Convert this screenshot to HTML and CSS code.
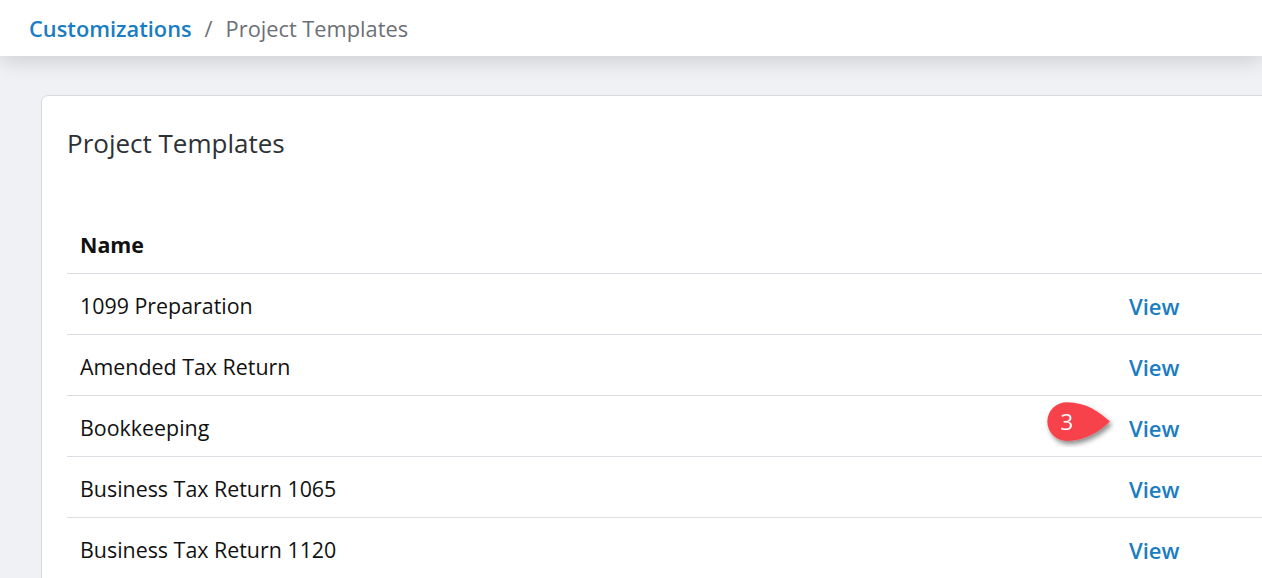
FILE: index.html
```html
<!DOCTYPE html>
<html lang="en">
<head>
<meta charset="utf-8">
<title>Project Templates</title>
<link rel="stylesheet" href="styles.css">
</head>
<body>
<header class="topbar">
  <nav class="crumbs">
    <a class="crumb-link" href="#">Customizations</a>
    <span class="crumb-sep">/</span>
    <span class="crumb-current">Project Templates</span>
  </nav>
</header>
<main class="page">
  <section class="card">
    <h1 class="card-title">Project Templates</h1>
    <div class="table">
      <div class="row head"><div class="cell">Name</div><div class="cell"></div></div>
      <div class="row"><div class="cell">1099 Preparation</div><div class="cell"><a class="view" href="#">View</a></div></div>
      <div class="row"><div class="cell">Amended Tax Return</div><div class="cell"><a class="view" href="#">View</a></div></div>
      <div class="row"><div class="cell">Bookkeeping</div><div class="cell action">
        <span class="badge">
          <svg class="badge-shape" viewBox="0 0 66 44" width="66" height="44">
            <defs>
              <filter id="sh" x="-30%" y="-30%" width="160%" height="180%">
                <feDropShadow dx="2" dy="3" stdDeviation="2.5" flood-color="#000" flood-opacity="0.45"/>
              </filter>
            </defs>
            <path d="M62 20 C52 11 40 2 22 2 A18 18 0 0 0 22 38 C40 38 52 29 62 20 Z" fill="#f7434b" filter="url(#sh)"/>
          </svg>
          <span class="badge-num">3</span>
        </span>
        <a class="view" href="#">View</a></div></div>
      <div class="row"><div class="cell">Business Tax Return 1065</div><div class="cell"><a class="view" href="#">View</a></div></div>
      <div class="row"><div class="cell">Business Tax Return 1120</div><div class="cell"><a class="view" href="#">View</a></div></div>
    </div>
  </section>
</main>
</body>
</html>
```

FILE: styles.css
```css
html, body {
  margin: 0;
  padding: 0;
}
body {
  background: #f0f1f5;
  font-family: "Open Sans", "Noto Sans", sans-serif;
  color: #1d1d1f;
  overflow: hidden;
  width: 1262px;
  height: 578px;
}
.topbar {
  height: 56px;
  background: #fff;
  box-shadow: 0 4px 22px rgba(0, 0, 0, 0.16);
  display: flex;
  align-items: center;
  padding-left: 29px;
  position: relative;
  z-index: 2;
}
.crumbs {
  display: flex;
  align-items: center;
  font-size: 21.8px;
}
.crumb-link {
  color: #1a7dc2;
  font-weight: 600;
  text-decoration: none;
}
.crumb-sep {
  color: #6c6f75;
  margin: 0 13px;
}
.crumb-current {
  color: #6c6f75;
}
.page {
  padding: 39px 0 0 41px;
}
.card {
  width: 1300px;
  height: 600px;
  background: #fff;
  border: 1px solid #d9dae0;
  border-radius: 7px;
  padding: 30px 0 0 25px;
  box-sizing: border-box;
}
.card-title {
  margin: 0;
  font-size: 26px;
  font-weight: 400;
  color: #2e3136;
  line-height: 34px;
}
.table {
  margin-top: 67px;
}
.row {
  display: grid;
  grid-template-columns: 1049px 200px;
  height: 60px;
  border-bottom: 1px solid #dcdde3;
  align-items: center;
  font-size: 21.4px;
  color: #111;
}
.row .cell {
  padding-top: 3px;
}
.row.head {
  height: 46px;
  font-weight: 700;
  align-items: start;
}
.row.head .cell {
  padding-top: 3px;
}
.cell {
  padding: 0 13px;
}
.action {
  position: relative;
}
.view {
  color: #1a7dc2;
  font-weight: 600;
  font-size: 22px;
  text-decoration: none;
}
.badge {
  position: absolute;
  left: -73px;
  top: -10px;
  width: 66px;
  height: 44px;
  transform: scale(1.08);
  transform-origin: left top;
}
.badge-shape {
  display: block;
}
.badge-num {
  position: absolute;
  left: 13px;
  top: 5px;
  width: 18px;
  text-align: center;
  color: #fff;
  font-size: 21px;
  line-height: 30px;
}
```
